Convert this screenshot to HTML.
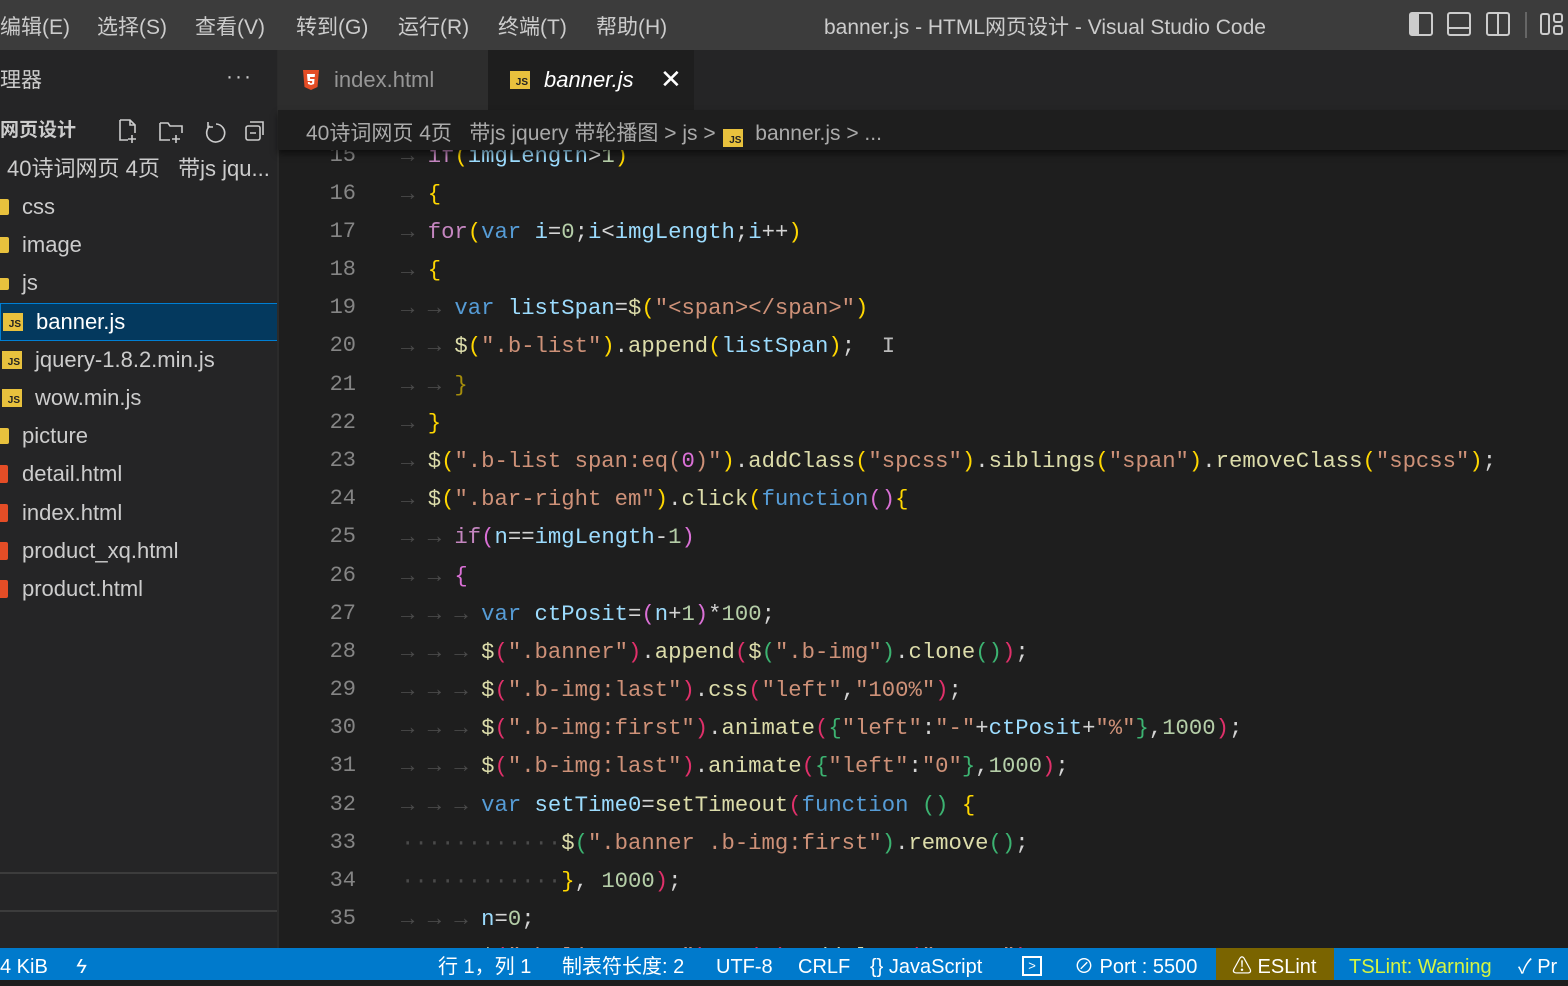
<!DOCTYPE html>
<html><head><meta charset="utf-8"><style>
*{margin:0;padding:0;box-sizing:border-box}
body{width:1568px;height:980px;overflow:hidden;background:#1e1e1e;font-family:"Liberation Sans","Noto Sans CJK SC",sans-serif;color:#ccc;position:relative}
.abs{position:absolute}
#title{left:0;top:0;width:1568px;height:50px;background:#3c3c3c}
#title span{position:absolute;top:11px;font-size:21px;color:#ccc;white-space:nowrap}
#side{left:0;top:50px;width:278px;height:898px;background:#252526}
.si{position:absolute;left:0;width:278px;height:38px;font-size:22px;color:#ccc;white-space:nowrap;line-height:38px}
.fold{position:absolute;left:0;top:11px;width:9px;height:16px;background:#e8c13d;border-radius:0 2px 2px 0}
.js{position:absolute;left:2px;top:10px;width:20px;height:18px;background:#e8c13d;color:#222;font-size:10px;font-weight:bold;line-height:24px;text-align:right;padding-right:2px;font-style:normal}
.h5{position:absolute;left:0;top:10px;width:8px;height:18px;background:#e44d26;border-radius:0 2px 2px 0}
#tabs{left:278px;top:50px;width:1290px;height:60px;background:#252526}
#bc{left:278px;top:110px;width:1290px;height:40px;background:#1e1e1e;box-shadow:0 4px 6px rgba(0,0,0,.5);z-index:3}
#status{left:0;top:948px;width:1568px;height:32px;background:#007acc;z-index:5}
#status span{position:absolute;top:0;line-height:38px;height:32px;font-size:20px;color:#fff;white-space:nowrap}
.ln{position:absolute;left:280px;width:76px;text-align:right;font-family:"Liberation Mono",monospace;font-size:22px;color:#858585;height:38px;line-height:38px}
.cl{position:absolute;left:401px;font-family:"Liberation Mono",monospace;font-size:22.25px;color:#d4d4d4;white-space:pre;height:38px;line-height:38px}
.k{color:#c586c0}.v{color:#569cd6}.s{color:#ce9178}.f{color:#dcdcaa}.i{color:#9cdcfe}.n{color:#b5cea8}
.y{color:#ffd700}.p{color:#da70d6}.b{color:#179fff}.g{color:#3cb371}.r{color:#e0306a}.a{color:#4a4a4a}
</style></head><body>
<div id="title" class="abs">
<span style="left:0">编辑(E)</span><span style="left:97px">选择(S)</span><span style="left:195px">查看(V)</span><span style="left:296px">转到(G)</span><span style="left:398px">运行(R)</span><span style="left:498px">终端(T)</span><span style="left:596px">帮助(H)</span>
<span style="left:824px">banner.js - HTML网页设计 - Visual Studio Code</span>
<svg class="abs" style="left:1408px;top:10px" width="160" height="28" viewBox="0 0 160 28" fill="none" stroke="#ccc" stroke-width="2"><rect x="2" y="3" width="22" height="22" rx="2"/><rect x="3" y="4" width="8" height="20" fill="#ccc" stroke="none"/><rect x="40" y="3" width="22" height="22" rx="2"/><line x1="40" y1="18" x2="62" y2="18"/><rect x="79" y="3" width="22" height="22" rx="2"/><line x1="90" y1="3" x2="90" y2="25"/><line x1="118" y1="2" x2="118" y2="28" stroke="#666"/><rect x="133" y="4" width="8" height="20" rx="2"/><rect x="146" y="4" width="8" height="8" rx="2"/><rect x="146" y="16" width="8" height="8" rx="2"/></svg>
</div>
<div id="side" class="abs">
<div class="si" style="top:12px;height:38px;font-size:21px">理器<span style="position:absolute;left:226px;top:-4px;letter-spacing:2px">···</span></div>
<div class="si" style="top:62px;font-weight:bold;font-size:19px">网页设计
<svg class="abs" style="left:116px;top:6px" width="156" height="26" viewBox="0 0 156 26" fill="none" stroke="#ccc" stroke-width="1.6"><path d="M4 2h10l5 5v8M4 2v20h8M14 2v5h5M16 17v8M12 21h8"/><path d="M44 5h8l2 3h12v7M44 5v17h10M60 17v8M56 21h8"/><path d="M100 6a9 9 0 1 1-6 2M92 4v5h5"/><rect x="130" y="8" width="14" height="14" rx="2"/><path d="M134 4h13v13M134 15h6"/></svg></div>
<div class="si" style="top:100px;padding-left:7px">40诗词网页 4页&nbsp;&nbsp; 带js jqu...</div>
<div class="si" style="top:138px"><i class="fold"></i><span style="position:absolute;left:22px">css</span></div>
<div class="si" style="top:176px"><i class="fold"></i><span style="position:absolute;left:22px">image</span></div>
<div class="si" style="top:214px"><i class="fold" style="height:12px;top:14px"></i><span style="position:absolute;left:22px">js</span></div>
<div class="si" style="top:253px;background:#04395e;border:1px solid #007fd4"><i class="js" style="top:9px">JS</i><span style="position:absolute;left:35px;top:-1px;color:#fff">banner.js</span></div>
<div class="si" style="top:291px"><i class="js">JS</i><span style="position:absolute;left:35px">jquery-1.8.2.min.js</span></div>
<div class="si" style="top:329px"><i class="js">JS</i><span style="position:absolute;left:35px">wow.min.js</span></div>
<div class="si" style="top:367px"><i class="fold"></i><span style="position:absolute;left:22px">picture</span></div>
<div class="si" style="top:405px"><i class="h5"></i><span style="position:absolute;left:22px">detail.html</span></div>
<div class="si" style="top:444px"><i class="h5"></i><span style="position:absolute;left:22px">index.html</span></div>
<div class="si" style="top:482px"><i class="h5"></i><span style="position:absolute;left:22px">product_xq.html</span></div>
<div class="si" style="top:520px"><i class="h5"></i><span style="position:absolute;left:22px">product.html</span></div>
<div class="abs" style="left:0;top:822px;width:278px;height:2px;background:#3c3c3c"></div>
<div class="abs" style="left:0;top:860px;width:278px;height:2px;background:#3c3c3c"></div>
</div>
<div class="abs" style="left:277px;top:50px;width:2px;height:898px;background:#2b2b2b"></div>
<div id="tabs" class="abs">
<div class="abs" style="left:0;top:0;width:210px;height:60px;background:#2d2d2d"></div>
<svg class="abs" style="left:24px;top:20px" width="18" height="20" viewBox="0 0 18 20"><path d="M1 0h16l-1.5 17L9 20l-6.5-3z" fill="#e44d26"/><path d="M5 4h8l-.3 3H8l.1 2h4.4l-.4 5L9 15l-3-1-.2-2h2l.1 1 1.1.3 1.1-.3.1-2H5.6z" fill="#fff"/></svg>
<span class="abs" style="left:56px;top:17px;font-size:22px;color:#969696">index.html</span>
<div class="abs" style="left:210px;top:0;width:206px;height:60px;background:#1e1e1e"></div>
<i class="js abs" style="left:232px;top:21px">JS</i>
<span class="abs" style="left:266px;top:17px;font-size:22px;color:#fff;font-style:italic">banner.js</span>
<span class="abs" style="left:382px;top:14px;font-size:26px;color:#fff">✕</span>
</div>
<div id="bc" class="abs">
<span class="abs" style="left:28px;top:7px;font-size:21px;color:#aaa;white-space:nowrap">40诗词网页 4页&nbsp;&nbsp; 带js jquery 带轮播图 &gt; js &gt; <i class="js" style="position:relative;display:inline-block;left:0;top:3px;margin:0 6px 0 2px">JS</i> banner.js &gt; ...</span>
</div>
<div class="ln" style="top:137px">15</div><div class="cl" style="top:137px"><span class="a">→ </span><span class="k">if</span><span class="y">(</span><span class="i">imgLength</span>&gt;<span class="n">1</span><span class="y">)</span></div>
<div class="ln" style="top:175px">16</div><div class="cl" style="top:175px"><span class="a">→ </span><span class="y">{</span></div>
<div class="ln" style="top:213px">17</div><div class="cl" style="top:213px"><span class="a">→ </span><span class="k">for</span><span class="y">(</span><span class="v">var</span> <span class="i">i</span>=<span class="n">0</span>;<span class="i">i</span>&lt;<span class="i">imgLength</span>;<span class="i">i</span>++<span class="y">)</span></div>
<div class="ln" style="top:251px">18</div><div class="cl" style="top:251px"><span class="a">→ </span><span class="y">{</span></div>
<div class="ln" style="top:289px">19</div><div class="cl" style="top:289px"><span class="a">→ → </span><span class="v">var</span> <span class="i">listSpan</span>=<span class="f">$</span><span class="y">(</span><span class="s">"&lt;span&gt;&lt;/span&gt;"</span><span class="y">)</span></div>
<div class="ln" style="top:327px">20</div><div class="cl" style="top:327px"><span class="a">→ → </span><span class="f">$</span><span class="y">(</span><span class="s">".b-list"</span><span class="y">)</span>.<span class="f">append</span><span class="y">(</span><span class="i">listSpan</span><span class="y">)</span>;  <span style="color:#bbb">I</span></div>
<div class="ln" style="top:366px">21</div><div class="cl" style="top:366px"><span class="a">→ → </span><span class="y" style="opacity:.6">}</span></div>
<div class="ln" style="top:404px">22</div><div class="cl" style="top:404px"><span class="a">→ </span><span class="y">}</span></div>
<div class="ln" style="top:442px">23</div><div class="cl" style="top:442px"><span class="a">→ </span><span class="f">$</span><span class="y">(</span><span class="s">".b-list span:eq(</span><span class="p">0</span><span class="s">)"</span><span class="y">)</span>.<span class="f">addClass</span><span class="y">(</span><span class="s">"spcss"</span><span class="y">)</span>.<span class="f">siblings</span><span class="y">(</span><span class="s">"span"</span><span class="y">)</span>.<span class="f">removeClass</span><span class="y">(</span><span class="s">"spcss"</span><span class="y">)</span>;</div>
<div class="ln" style="top:480px">24</div><div class="cl" style="top:480px"><span class="a">→ </span><span class="f">$</span><span class="y">(</span><span class="s">".bar-right em"</span><span class="y">)</span>.<span class="f">click</span><span class="y">(</span><span class="v">function</span><span class="p">()</span><span class="y">{</span></div>
<div class="ln" style="top:518px">25</div><div class="cl" style="top:518px"><span class="a">→ → </span><span class="k">if</span><span class="p">(</span><span class="i">n</span>==<span class="i">imgLength</span>-<span class="n">1</span><span class="p">)</span></div>
<div class="ln" style="top:557px">26</div><div class="cl" style="top:557px"><span class="a">→ → </span><span class="p">{</span></div>
<div class="ln" style="top:595px">27</div><div class="cl" style="top:595px"><span class="a">→ → → </span><span class="v">var</span> <span class="i">ctPosit</span>=<span class="p">(</span><span class="i">n</span>+<span class="n">1</span><span class="p">)</span>*<span class="n">100</span>;</div>
<div class="ln" style="top:633px">28</div><div class="cl" style="top:633px"><span class="a">→ → → </span><span class="f">$</span><span class="r">(</span><span class="s">".banner"</span><span class="r">)</span>.<span class="f">append</span><span class="r">(</span><span class="f">$</span><span class="g">(</span><span class="s">".b-img"</span><span class="g">)</span>.<span class="f">clone</span><span class="g">()</span><span class="r">)</span>;</div>
<div class="ln" style="top:671px">29</div><div class="cl" style="top:671px"><span class="a">→ → → </span><span class="f">$</span><span class="r">(</span><span class="s">".b-img:last"</span><span class="r">)</span>.<span class="f">css</span><span class="r">(</span><span class="s">"left"</span>,<span class="s">"100%"</span><span class="r">)</span>;</div>
<div class="ln" style="top:709px">30</div><div class="cl" style="top:709px"><span class="a">→ → → </span><span class="f">$</span><span class="r">(</span><span class="s">".b-img:first"</span><span class="r">)</span>.<span class="f">animate</span><span class="r">(</span><span class="g">{</span><span class="s">"left"</span>:<span class="s">"-"</span>+<span class="i">ctPosit</span>+<span class="s">"%"</span><span class="g">}</span>,<span class="n">1000</span><span class="r">)</span>;</div>
<div class="ln" style="top:747px">31</div><div class="cl" style="top:747px"><span class="a">→ → → </span><span class="f">$</span><span class="r">(</span><span class="s">".b-img:last"</span><span class="r">)</span>.<span class="f">animate</span><span class="r">(</span><span class="g">{</span><span class="s">"left"</span>:<span class="s">"0"</span><span class="g">}</span>,<span class="n">1000</span><span class="r">)</span>;</div>
<div class="ln" style="top:786px">32</div><div class="cl" style="top:786px"><span class="a">→ → → </span><span class="v">var</span> <span class="i">setTime0</span>=<span class="f">setTimeout</span><span class="r">(</span><span class="v">function</span> <span class="g">()</span> <span class="y">{</span></div>
<div class="ln" style="top:824px">33</div><div class="cl" style="top:824px"><span class="a">············</span><span class="f">$</span><span class="g">(</span><span class="s">".banner .b-img:first"</span><span class="g">)</span>.<span class="f">remove</span><span class="g">()</span>;</div>
<div class="ln" style="top:862px">34</div><div class="cl" style="top:862px"><span class="a">············</span><span class="y">}</span>, <span class="n">1000</span><span class="r">)</span>;</div>
<div class="ln" style="top:900px">35</div><div class="cl" style="top:900px"><span class="a">→ → → </span><span class="i">n</span>=<span class="n">0</span>;</div>
<div class="cl" style="top:938px"><span class="a">→ → → </span><span class="f">$</span><span class="r">(</span><span class="s">".b-list span"</span><span class="r">)</span>.<span class="f">eq</span><span class="r">(</span><span class="i">n</span><span class="r">)</span>.<span class="f">addClass</span><span class="r">(</span><span class="s">"spcss"</span><span class="r">)</span></div>
<div id="status" class="abs">
<span style="left:0">4 KiB</span><span style="left:76px;font-style:italic">ϟ</span>
<span style="left:438px">行 1，列 1</span><span style="left:562px">制表符长度: 2</span><span style="left:716px">UTF-8</span><span style="left:798px">CRLF</span><span style="left:870px">{} JavaScript</span>
<div class="abs" style="left:1022px;top:8px;border:2px solid #fff;width:20px;height:20px;font-size:13px;text-align:center;line-height:16px;color:#fff">&gt;</div>
<span style="left:1074px">⊘ Port : 5500</span>
<div class="abs" style="left:1216px;top:0;width:118px;height:32px;background:#7a6400"></div>
<span style="left:1232px">⚠ ESLint</span>
<span style="left:1349px;color:#d6f542">TSLint: Warning</span>
<span style="left:1518px">✓ Pr</span>
</div>
</body></html>
